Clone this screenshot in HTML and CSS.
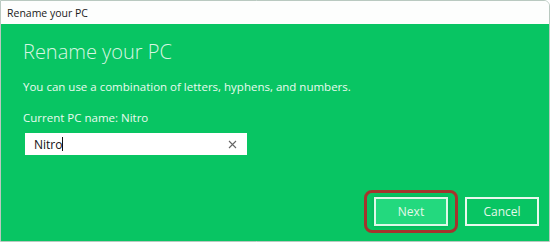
FILE: index.html
```html
<!DOCTYPE html>
<html>
<head>
<meta charset="utf-8">
<link rel="stylesheet" href="styles.css">
</head>
<body>
<div class="window">
  <div class="titlebar">Rename your PC</div>
  <div class="content">
    <h1 class="heading">Rename your PC</h1>
    <p class="desc">You can use a combination of letters, hyphens, and numbers.</p>
    <p class="current">Current PC name: Nitro</p>
    <div class="input">
      <span class="value">Nitro<span class="caret"></span></span>
      <svg class="clear" width="9" height="9" viewBox="0 0 9 9"><path d="M1 1L8 8M8 1L1 8" stroke="#666" stroke-width="1.1" fill="none"/></svg>
    </div>
    <div class="actions">
      <div class="highlight">
        <button class="btn primary">Next</button>
      </div>
      <button class="btn">Cancel</button>
    </div>
  </div>
</div>
</body>
</html>
```
FILE: styles.css
```css
* { box-sizing: border-box; }
html, body { margin: 0; padding: 0; }
body {
  width: 550px;
  height: 242px;
  background: #ffffff;
  font-family: "Open Sans", "Noto Sans", sans-serif;
  overflow: hidden;
}
.window {
  width: 550px;
  height: 242px;
  display: flex;
  flex-direction: column;
  border: 1px solid #b9c9c0;
  border-radius: 0 6px 0 0;
  overflow: hidden;
}
.titlebar {
  height: 23px;
  background: #fdfefd;
  color: #1a1a1a;
  font-size: 10.5px;
  padding-left: 6px;
  display: flex;
  align-items: center;
}
.content {
  flex: 1;
  background: #08c563;
  padding: 14px 0 0 22px;
  display: flex;
  flex-direction: column;
}
.heading {
  margin: 0;
  font-weight: 300;
  font-size: 20px;
  line-height: 28px;
  color: #d9f6e2;
}
.desc {
  margin: 13px 0 0 0;
  font-size: 11.5px;
  line-height: 16px;
  color: #eafbef;
}
.current {
  margin: 15px 0 0 0;
  font-size: 11.5px;
  line-height: 16px;
  color: #eafbef;
}
.input {
  margin-top: 7px;
  margin-left: 2px;
  width: 222px;
  height: 22px;
  background: #ffffff;
  display: flex;
  align-items: center;
  justify-content: space-between;
  padding: 0 10px 0 9px;
}
.value {
  font-size: 12px;
  color: #111;
  display: flex;
  align-items: center;
}
.caret {
  display: inline-block;
  width: 1px;
  height: 14px;
  background: #111;
  margin-left: 0;
}
.actions {
  margin-top: 35px;
  display: flex;
  justify-content: flex-end;
  align-items: center;
  gap: 7px;
  padding-right: 10px;
}
.highlight {
  border: 3px solid #a4352d;
  border-radius: 8px;
  padding: 4px 7px;
  display: flex;
}
.btn {
  width: 74px;
  height: 29px;
  border: 2px solid #e8f9ee;
  background: #08c563;
  color: #e4f8ea;
  font-family: "Open Sans", "Noto Sans", sans-serif;
  font-size: 12px;
  padding: 0;
}
.primary {
  background: #23d97e;
  border-color: #dff8e8;
  box-shadow: 0 0 4px rgba(0,0,0,0.15);
}
```
